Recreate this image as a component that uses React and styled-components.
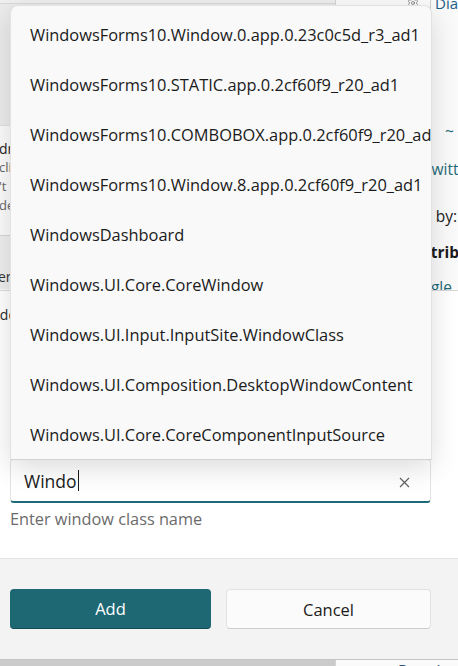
import styled, { createGlobalStyle } from "styled-components";
import { Settings } from "lucide-react";

const suggestions = [
  "WindowsForms10.Window.0.app.0.23c0c5d_r3_ad1",
  "WindowsForms10.STATIC.app.0.2cf60f9_r20_ad1",
  "WindowsForms10.COMBOBOX.app.0.2cf60f9_r20_ad1",
  "WindowsForms10.Window.8.app.0.2cf60f9_r20_ad1",
  "WindowsDashboard",
  "Windows.UI.Core.CoreWindow",
  "Windows.UI.Input.InputSite.WindowClass",
  "Windows.UI.Composition.DesktopWindowContent",
  "Windows.UI.Core.CoreComponentInputSource",
];

const GlobalStyle = createGlobalStyle`
  * { box-sizing: border-box; }
  body {
    margin: 0;
    font-family: "Segoe UI", "Open Sans", sans-serif;
    color: #1b1b1b;
    background: #f3f3f3;
  }
`;

function App() {
  return (
    <Page>
      <GlobalStyle />
      <Backdrop>
        <LeftPane>
          <TopLine />
          <HeaderBand />
          <InfoBand>
            <InfoLine $strong>dress bar</InfoLine>
            <InfoLine>click</InfoLine>
            <InfoLine>'t show</InfoLine>
            <InfoLine>details</InfoLine>
          </InfoBand>
          <FilterBand>
            <FilterText>er</FilterText>
          </FilterBand>
          <Filler />
          <StatusBand />
        </LeftPane>
        <RightPane>
          <ToolRow>
            <Settings size={12} color="#7a7a7a" strokeWidth={1.6} />
            <ToolDivider />
            <LinkText>Diagnostics</LinkText>
          </ToolRow>
          <SideLine $top={108} $indent={109} $link>~</SideLine>
          <SideLine $top={18} $indent={87} $link>Twitter</SideLine>
          <SideLine $top={27} $indent={42}>Written by:</SideLine>
          <SideLine $top={16} $indent={65} $bold>Contributors</SideLine>
          <SideLine $top={15} $indent={65} $link $underline>Google</SideLine>
          <Filler />
          <SideLine $top={0} $indent={62} $author>Douglas</SideLine>
        </RightPane>
      </Backdrop>

      <Overlay>
        <Dialog>
          <DialogBody>
            <DialogTitle>Add window class</DialogTitle>
            <Field>
              <FieldLabel>Window class</FieldLabel>
              <InputBox>
                <InputText>
                  Windo
                  <Caret />
                </InputText>
                <ClearButton>
                  <svg width="11" height="11" viewBox="0 0 11 11">
                    <path d="M1 1 L10 10 M10 1 L1 10" stroke="#5c5c5c" strokeWidth="1.1" fill="none" />
                  </svg>
                </ClearButton>
              </InputBox>
              <HelperText>Enter window class name</HelperText>
            </Field>
          </DialogBody>
          <DialogFooter>
            <PrimaryButton>Add</PrimaryButton>
            <SecondaryButton>Cancel</SecondaryButton>
          </DialogFooter>
        </Dialog>

        <SuggestionList>
          {suggestions.map((s) => (
            <SuggestionItem key={s}>{s}</SuggestionItem>
          ))}
        </SuggestionList>
      </Overlay>
    </Page>
  );
}

export default App;

const Page = styled.div`
  position: relative;
  width: 458px;
  height: 666px;
  overflow: hidden;
  background: #f3f3f3;
`;

const Backdrop = styled.div`
  display: grid;
  grid-template-columns: 336px 1fr;
  height: 681px;
`;

const LeftPane = styled.div`
  display: flex;
  flex-direction: column;
  background: #fbfbfb;
  border-right: 1px solid #d4d4d4;
`;

const TopLine = styled.div`
  height: 4px;
  background: #efefef;
  border-bottom: 1px solid #d9d9d9;
`;

const HeaderBand = styled.div`
  height: 122px;
  background: #ebebeb;
  border-bottom: 1px solid #e0e0e0;
`;

const InfoBand = styled.div`
  height: 110px;
  padding: 13px 0 0 0;
  background: #fbfbfb;
  border-bottom: 1px solid #d6d6d6;
`;

const InfoLine = styled.div`
  font-size: ${(p) => (p.$strong ? "14px" : "13px")};
  line-height: 19px;
  color: ${(p) => (p.$strong ? "#1f1f1f" : "#666")};
  white-space: nowrap;
  margin-left: -1px;
`;

const FilterBand = styled.div`
  height: 53px;
  background: #eeeeee;
  padding-top: 32px;
`;

const FilterText = styled.div`
  font-size: 14px;
  line-height: 18px;
  color: #333;
  margin-left: -2px;
`;

const Filler = styled.div`
  flex: 1;
`;

const StatusBand = styled.div`
  height: 21px;
  background: #cbcbcb;
`;

const RightPane = styled.div`
  display: flex;
  flex-direction: column;
  background: #fafafa;
`;

const ToolRow = styled.div`
  display: flex;
  align-items: center;
  height: 20px;
  margin-top: -7px;
  padding-left: 71px;
`;

const ToolDivider = styled.div`
  width: 1px;
  height: 20px;
  background: #cfcfcf;
  margin: 0 4px 0 11px;
`;

const LinkText = styled.span`
  font-size: 15px;
  color: #1e5f86;
  white-space: nowrap;
`;

const SideLine = styled.div`
  margin-top: ${(p) => p.$top}px;
  padding-left: ${(p) => p.$indent}px;
  font-size: 15.5px;
  line-height: 20px;
  white-space: nowrap;
  font-weight: ${(p) => (p.$bold ? 700 : 400)};
  color: ${(p) => (p.$link ? "#1f6b78" : p.$author ? "#2a4f73" : "#1b1b1b")};
  text-decoration: ${(p) => (p.$underline ? "underline" : "none")};
`;

const Overlay = styled.div`
  position: absolute;
  inset: 0;
  display: flex;
  flex-direction: column;
  padding-top: 290px;
`;

const Dialog = styled.div`
  height: 370px;
  display: flex;
  flex-direction: column;
  background: #ffffff;
  border-top: 1px solid #d9d9d9;
  border-bottom: 1px solid #c4c4c4;
`;

const DialogBody = styled.div`
  flex: 1;
  display: flex;
  flex-direction: column;
  padding: 14px 27px 29px 10px;
  background: #ffffff;
`;

const DialogTitle = styled.div`
  font-size: 14px;
  line-height: 20px;
  color: #2a2a2a;
  margin-left: -19px;
  white-space: nowrap;
`;

const Field = styled.div`
  margin-top: auto;
  display: flex;
  flex-direction: column;
`;

const FieldLabel = styled.div`
  font-size: 14px;
  line-height: 20px;
  margin-bottom: 8px;
`;

const InputBox = styled.div`
  height: 44px;
  display: flex;
  align-items: center;
  justify-content: space-between;
  padding: 0 20px 0 13px;
  background: #ffffff;
  border: 1px solid #e3e3e3;
  border-bottom: 2px solid #1c6a77;
  border-radius: 4px;
`;

const InputText = styled.div`
  display: flex;
  align-items: center;
  font-size: 17.5px;
  color: #1b1b1b;
`;

const Caret = styled.span`
  width: 1px;
  height: 21px;
  background: #1b1b1b;
  margin-left: 1px;
`;

const ClearButton = styled.div`
  display: flex;
  align-items: center;
  margin-top: 4px;
`;

const HelperText = styled.div`
  margin-top: 6px;
  font-size: 16.3px;
  line-height: 20px;
  color: #6b6b6b;
`;

const DialogFooter = styled.div`
  height: 101px;
  display: grid;
  grid-template-columns: 201px 205px;
  column-gap: 15px;
  align-items: start;
  padding: 30px 27px 0 10px;
  background: #f3f3f3;
  border-top: 1px solid #e2e2e2;
`;

const BaseButton = styled.div`
  height: 40px;
  display: flex;
  align-items: center;
  justify-content: center;
  border-radius: 4px;
  font-size: 16.5px;
`;

const PrimaryButton = styled(BaseButton)`
  background: #1e6874;
  color: #ffffff;
  border-bottom: 1px solid #144c55;
`;

const SecondaryButton = styled(BaseButton)`
  background: #fbfbfb;
  color: #1b1b1b;
  border: 1px solid #e2e2e2;
  border-bottom-color: #cdcdcd;
`;

const SuggestionList = styled.div`
  position: absolute;
  top: 5px;
  left: 10px;
  width: 422px;
  height: 455px;
  padding-top: 3px;
  background: #f9f9f9;
  border: 1px solid #e2e2e2;
  border-bottom-color: #d2d2d2;
  border-radius: 8px 8px 0 0;
  box-shadow: 0 8px 28px rgba(0, 0, 0, 0.14);
  overflow: hidden;
`;

const SuggestionItem = styled.div`
  height: 50px;
  display: flex;
  align-items: center;
  padding: 0 12px 0 19px;
  font-size: 16.4px;
  color: #1b1b1b;
  white-space: nowrap;
  overflow: hidden;
`;
